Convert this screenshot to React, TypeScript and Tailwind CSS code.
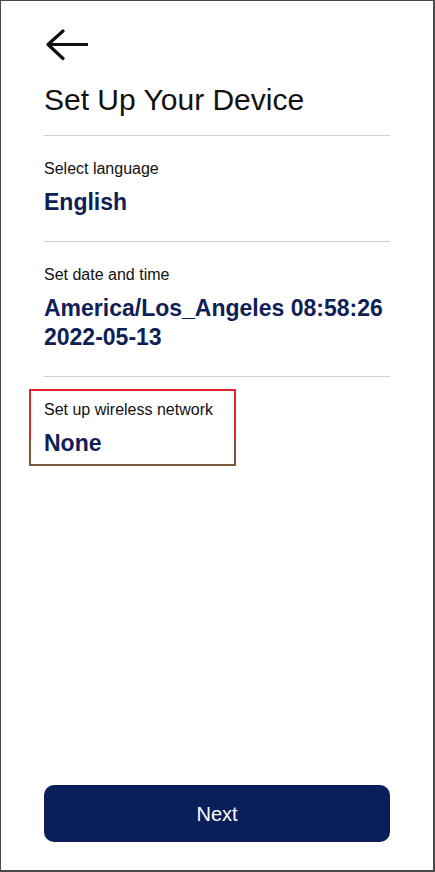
import React from "react";

const font = { fontFamily: '"Liberation Sans", Arial, sans-serif' };

const sections = [
  { label: "Select language", value: ["English"] },
  { label: "Set date and time", value: ["America/Los_Angeles 08:58:26", "2022-05-13"] },
];

const BackArrow = () => (
  <svg width="42" height="32" viewBox="0 0 42 32" fill="none" className="ml-[2px] mt-[28px]">
    <path d="M2 15.5H41M17 2L2 15.5L17 29.5" stroke="#111" strokeWidth="3.2" strokeLinecap="round" strokeLinejoin="round" />
  </svg>
);

const Setting = ({ label, value }: { label: string; value: string[] }) => (
  <div className="pt-[23px] pb-[24px] border-b border-[#cfcfcf]">
    <div className="text-[16px] leading-[20px] text-[#111]">{label}</div>
    <div className="mt-[9px] text-[23px] leading-[29px] font-bold text-[#0f2057]">
      {value.map((v) => (
        <div key={v}>{v}</div>
      ))}
    </div>
  </div>
);

export default function App() {
  return (
    <div
      style={font}
      className="w-[435px] h-[872px] bg-white border-l border-t border-r-2 border-b-2 border-[#4a4a4a] flex flex-col px-[43px] pb-[28px] box-border"
    >
      <BackArrow />
      <h1 className="mt-[21px] text-[30px] leading-[36px] font-normal text-[#111] pb-[17px] border-b border-[#cfcfcf]">
        Set Up Your Device
      </h1>
      {sections.map((s) => (
        <Setting key={s.label} label={s.label} value={s.value} />
      ))}
      <div className="relative pt-[23px]">
        <div className="text-[16px] leading-[20px] text-[#111]">Set up wireless network</div>
        <div className="mt-[9px] text-[23px] leading-[29px] font-bold text-[#0f2057]">None</div>
        <div className="absolute left-[-15px] top-[12px] w-[207px] h-[77px] border-2 border-[#e2242f]">
          <div className="absolute left-[-2px] right-[-2px] bottom-[-2px] h-[27px] border-x-2 border-b-2 border-[#7b5a3c]" />
        </div>
      </div>
      <div className="flex-1" />
      <button className="h-[57px] w-full rounded-[10px] bg-[#0a1e5a] text-white text-[20px]">Next</button>
    </div>
  );
}
